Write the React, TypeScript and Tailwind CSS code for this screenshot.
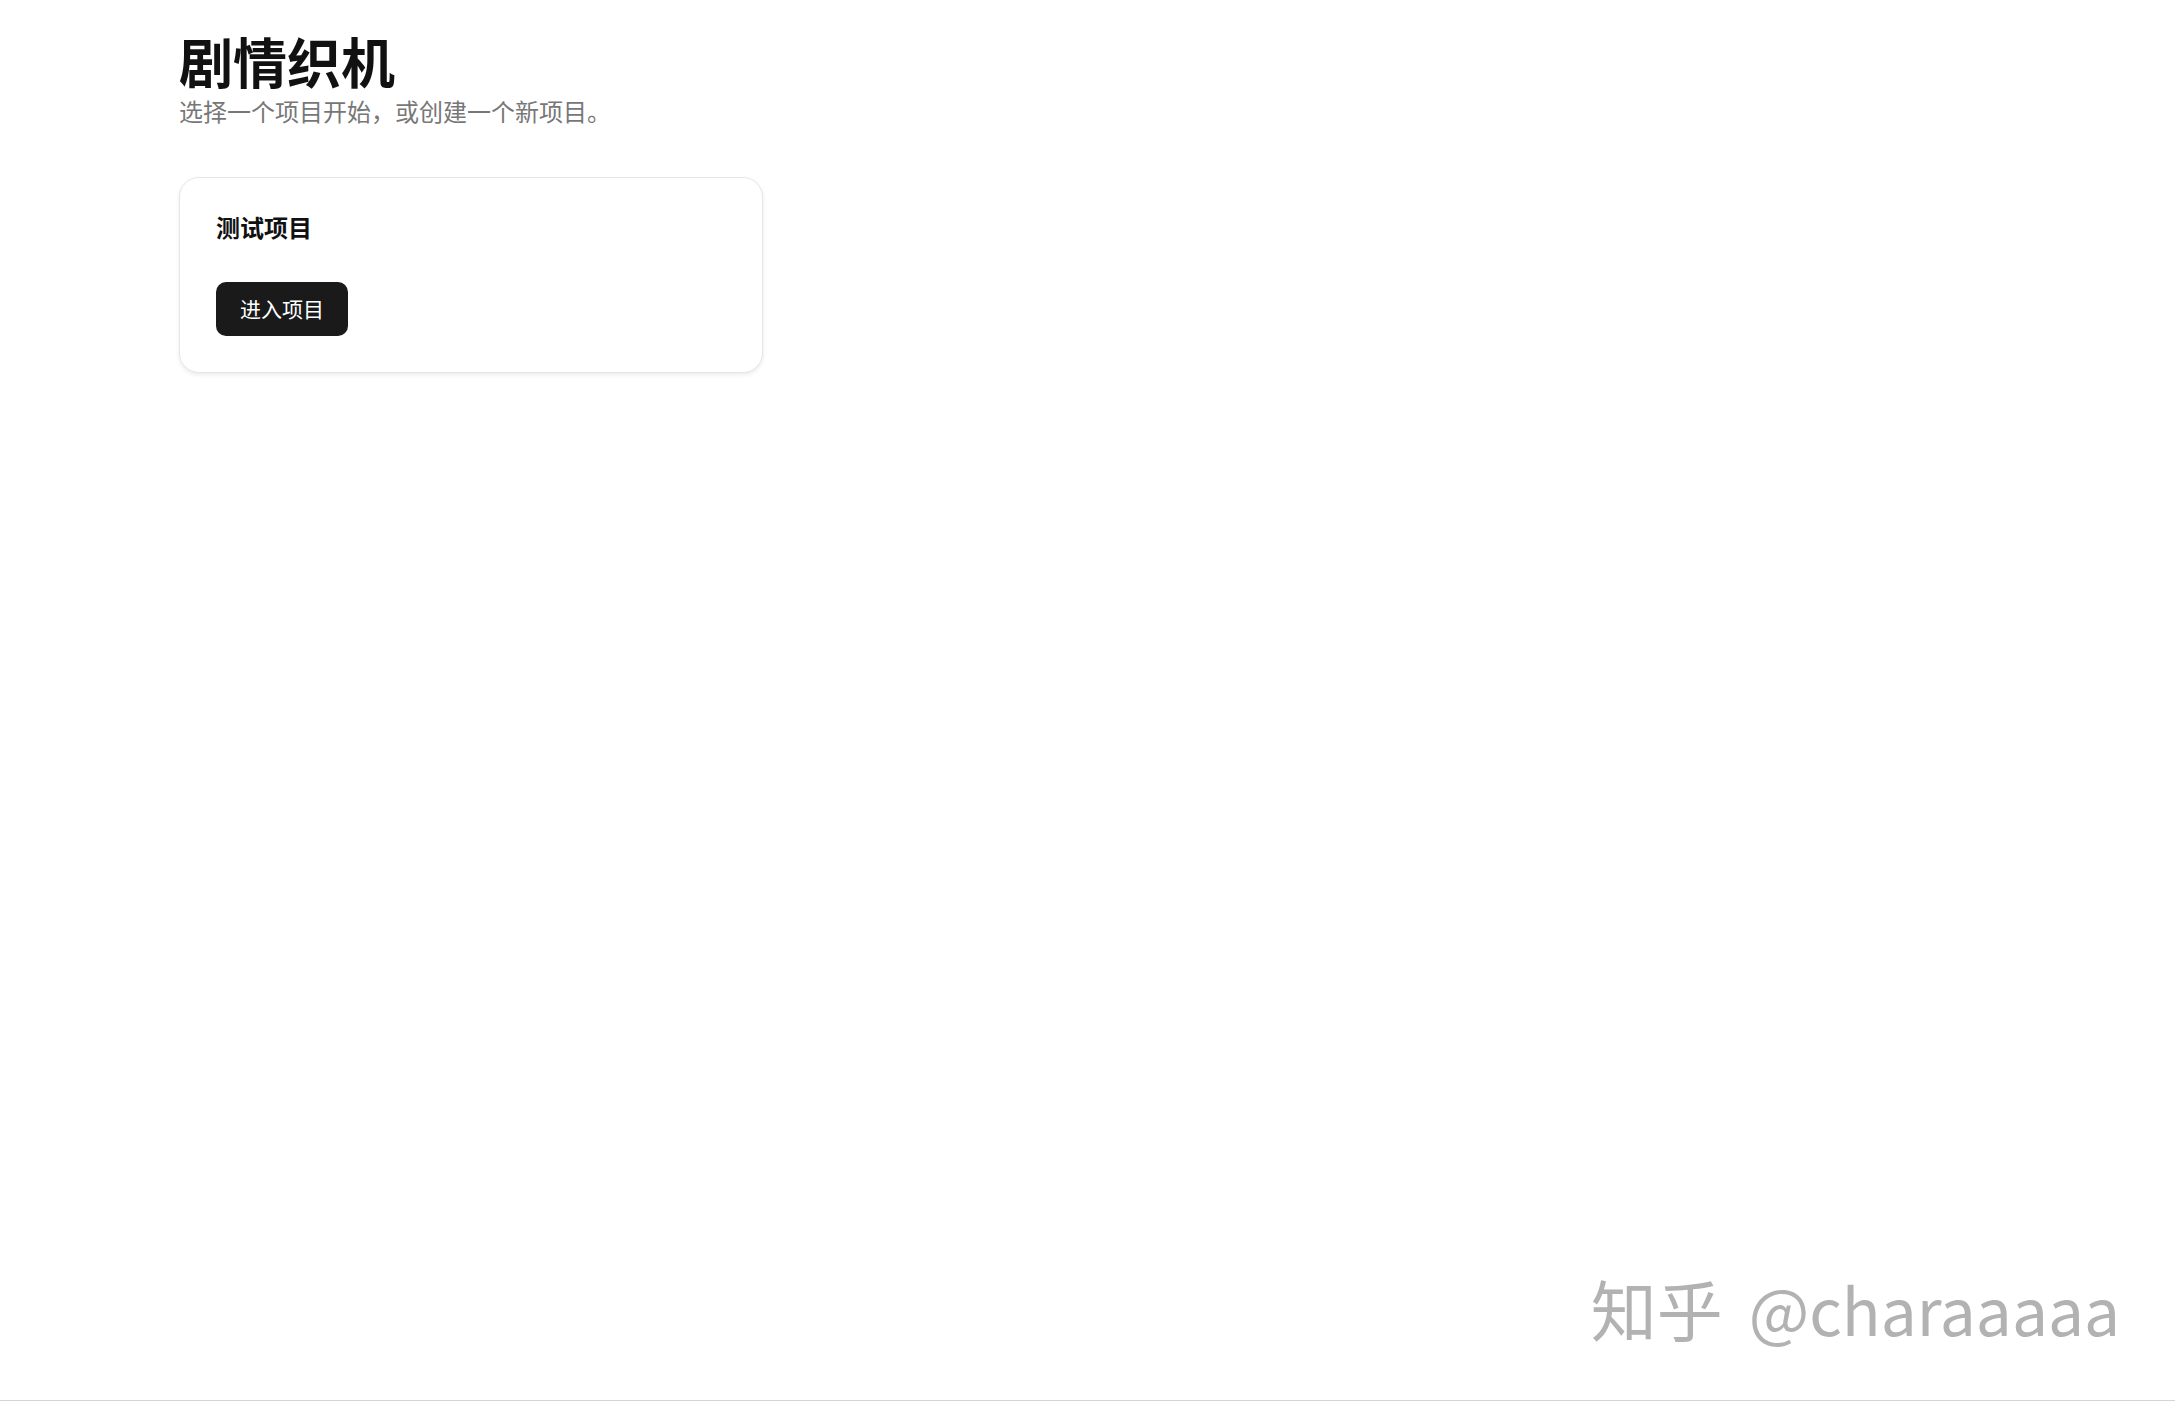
import React from 'react'

interface Project {
  id: string
  name: string
}

const projects: Project[] = [{ id: '1', name: '测试项目' }]

export default function App() {
  return (
    <div
      className="relative h-[1401px] w-full overflow-hidden border-b border-[#d4d4d4] bg-white"
      style={{ fontFamily: '"Noto Sans CJK SC", "Noto Sans", sans-serif' }}
    >
      <div className="pl-[179px] pt-[31px]">
        {/* Header */}
        <h1 className="text-[54px] font-bold leading-[1.1] text-[#111]">剧情织机</h1>
        <p className="mt-[4px] text-[24px] leading-[1.4] text-[#777]">
          选择一个项目开始，或创建一个新项目。
        </p>

        {/* Project cards */}
        <div className="mt-[49px] flex flex-wrap gap-6">
          {projects.map((p) => (
            <div
              key={p.id}
              className="flex h-[196px] w-[584px] flex-col items-start rounded-[20px] border border-[#e6e6e6] bg-white px-[36px] pt-[33px] shadow-[0_2px_4px_rgba(0,0,0,0.08)]"
            >
              <h3 className="text-[24px] font-bold leading-[1.3] text-[#111]">{p.name}</h3>
              <button className="mt-[40px] h-[54px] rounded-[10px] bg-[#1a1a1a] px-[24px] text-[21px] text-white">
                进入项目
              </button>
            </div>
          ))}
        </div>
      </div>

      {/* Watermark */}
      <div
        className="absolute bottom-[60px] right-[55px] flex items-baseline gap-[26px] text-[64px] leading-none text-[#b2b2b2] [text-shadow:2px_2px_0_#fff]"
        style={{ fontFamily: '"Noto Sans CJK SC", "Open Sans", sans-serif' }}
      >
        <span className="text-[66px]">知乎</span>
        <span>@charaaaaa</span>
      </div>
    </div>
  )
}
